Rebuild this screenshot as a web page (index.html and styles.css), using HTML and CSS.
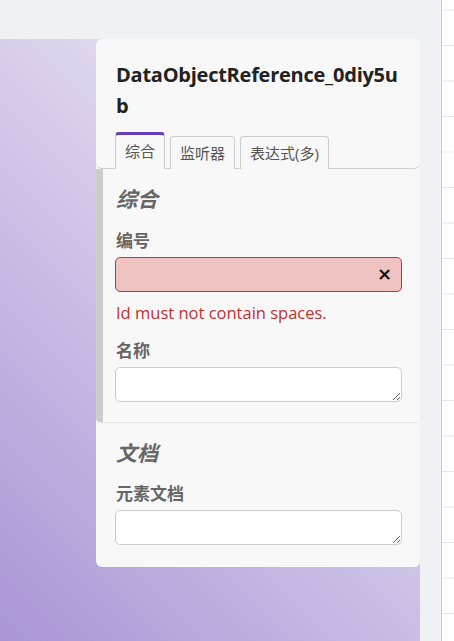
FILE: index.html
```
<!DOCTYPE html>
<html lang="zh-CN">
<head>
<meta charset="utf-8">
<title>DataObjectReference properties</title>
<link rel="stylesheet" href="styles.css">
</head>
<body>
<div class="app">
  <div class="workspace">
    <div class="topbar"></div>
    <div class="stage">
      <div class="canvas">
        <aside class="panel">
          <div class="panel-header">
            <h1 class="title">DataObjectReference_0diy5ub</h1>
            <div class="tabs">
              <div class="tab active">综合</div>
              <div class="tab">监听器</div>
              <div class="tab">表达式(多)</div>
            </div>
          </div>
          <section class="group group-first">
            <h2 class="group-title">综合</h2>
            <label class="label">编号</label>
            <div class="input-wrap">
              <input class="input invalid" type="text" value="">
              <span class="clear">×</span>
            </div>
            <div class="error">Id must not contain spaces.</div>
            <label class="label label-gap">名称</label>
            <textarea class="textarea"></textarea>
          </section>
          <section class="group group-doc">
            <h2 class="group-title">文档</h2>
            <label class="label">元素文档</label>
            <textarea class="textarea"></textarea>
          </section>
        </aside>
      </div>
    </div>
  </div>
  <div class="ruler"></div>
</div>
</body>
</html>
```
FILE: styles.css
```
* { box-sizing: border-box; }
html, body { margin: 0; padding: 0; }
body {
  background: #f0f1f5;
  font-family: "Open Sans", "Noto Sans CJK SC", sans-serif;
  width: 454px;
  height: 641px;
  overflow: hidden;
}
.app {
  display: flex;
  height: 641px;
}
.workspace {
  width: 441px;
  display: flex;
  flex-direction: column;
}
.topbar {
  height: 39px;
  background: #f0f1f5;
}
.stage {
  flex: 1;
  padding-right: 21px;
  background: #f0f1f5;
}
.canvas {
  position: relative;
  height: 100%;
  background: linear-gradient(45deg, #a995d5 0%, #f9f7f9 100%);
}
.panel {
  position: absolute;
  top: 0;
  right: 0;
  width: 324px;
  background: #f8f8f8;
  border-radius: 6px;
}
.panel-header {
  padding: 20px 18px 0 19px;
  border-bottom: 1px solid #cfcfcf;
  border-radius: 6px;
}
.title {
  margin: 0 0 0 1px;
  font-size: 20px;
  line-height: 31px;
  font-weight: 700;
  letter-spacing: -0.25px;
  color: #222;
  word-break: break-all;
}
.tabs {
  display: flex;
  align-items: flex-end;
  gap: 5px;
  margin-top: 11px;
  margin-bottom: -1px;
}
.tab {
  height: 33px;
  padding: 0 9px;
  border: 1px solid #cccccc;
  border-bottom: none;
  border-radius: 4px 4px 0 0;
  font-size: 15px;
  line-height: 32px;
  color: #555;
  background: #f8f8f8;
}
.tab.active {
  height: 37px;
  border-top: 3px solid #6a3cbc;
  line-height: 33px;
}
.group {
  padding: 15px 18px 20px 12px;
}
.group-first {
  border-left: 7px solid #cccccc;
  border-bottom-left-radius: 4px;
}
.group-doc {
  border-top: 1px dotted #cfcfcf;
  border-radius: 6px;
  padding-left: 19px;
  padding-bottom: 22px;
}
.group-title {
  margin: 0 0 0 1px;
  font-size: 21px;
  line-height: 30px;
  font-style: italic;
  font-weight: 700;
  color: #666;
}
.label {
  display: block;
  margin: 15px 0 4px 1px;
  font-size: 17px;
  line-height: 24px;
  font-weight: 700;
  color: #666;
}
.group-doc .label { margin-top: 14px; }
.label-gap { margin-top: 14px; }
.input-wrap {
  position: relative;
}
.input {
  display: block;
  width: 100%;
  height: 35px;
  border: 1px solid #cccccc;
  border-radius: 5px;
  background: #fff;
  font: inherit;
  padding: 0 8px;
  outline: none;
}
.input.invalid {
  background: #f0c3c3;
  border-color: #cc3333;
}
.clear {
  position: absolute;
  right: 10px;
  top: 8px;
  font-size: 18px;
  line-height: 18px;
  font-weight: 700;
  color: #111;
  font-family: "DejaVu Sans", sans-serif;
}
.error {
  margin-top: 9px;
  margin-left: 1px;
  font-size: 16.5px;
  line-height: 24px;
  color: #c2302e;
}
.textarea {
  display: block;
  width: 100%;
  height: 35px;
  margin: 0;
  border: 1px solid #cccccc;
  border-radius: 5px;
  background: #fff;
  font: inherit;
  resize: vertical;
  outline: none;
}
.ruler {
  width: 13px;
  border-left: 1px solid #cccccc;
  background-color: #ffffff;
  background-image: linear-gradient(to bottom, #e6e6e6 0, #e6e6e6 1px, transparent 1px);
  background-size: 100% 35.5px;
  background-position: 0 9.5px;
}
```
